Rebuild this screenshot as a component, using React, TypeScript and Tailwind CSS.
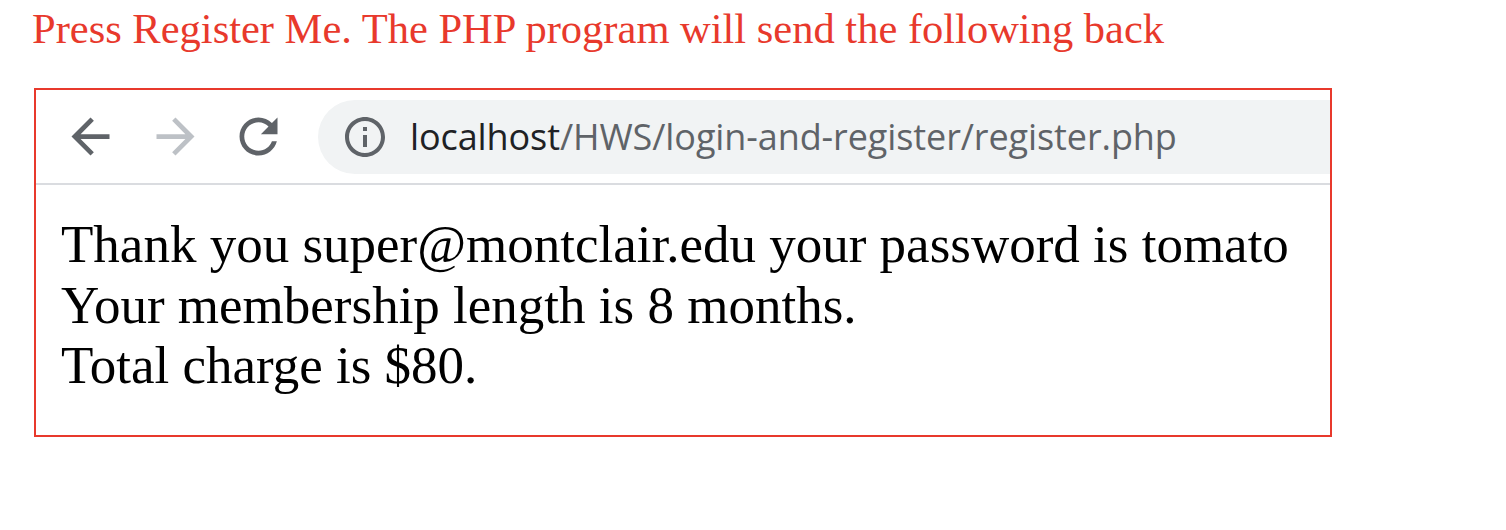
import React from "react";

const Icon = ({ d, className }: { d: string; className: string }) => (
  <svg viewBox="0 0 24 24" className={className} fill="currentColor">
    <path d={d} />
  </svg>
);

export default function App() {
  return (
    <div className="w-[1506px] h-[530px] bg-white pl-[32px] pt-[6px]" style={{ fontFamily: '"Liberation Serif", "Times New Roman", serif' }}>
      <p className="text-[42.5px] leading-[46px] text-[#e8392c]">
        Press Register Me. The PHP program will send the following back
      </p>
      <div className="mt-[36px] ml-[2px] w-[1298px] h-[349px] border-2 border-[#e8392c] overflow-hidden">
        <div className="h-[93px] flex items-center border-b-2 border-[#dadce0] box-content">
          <Icon
            className="w-[57px] h-[57px] ml-[26px] text-[#5f6368]"
            d="M20 11H7.83l5.59-5.59L12 4l-8 8 8 8 1.41-1.41L7.83 13H20v-2z"
          />
          <Icon
            className="w-[57px] h-[57px] ml-[28px] text-[#bdc1c6]"
            d="M12 4l-1.41 1.41L16.17 11H4v2h12.17l-5.58 5.59L12 20l8-8z"
          />
          <Icon
            className="w-[57px] h-[57px] ml-[26px] text-[#5f6368]"
            d="M17.65 6.35C16.2 4.9 14.21 4 12 4c-4.42 0-7.99 3.58-7.99 8s3.57 8 7.99 8c3.73 0 6.84-2.55 7.73-6h-2.08c-.82 2.33-3.04 4-5.65 4-3.31 0-6-2.69-6-6s2.69-6 6-6c1.66 0 3.14.69 4.22 1.78L13 11h7V4l-2.35 2.35z"
          />
          <div className="ml-[31px] flex-1 h-[74px] rounded-l-full bg-[#f1f3f4] flex items-center">
            <Icon
              className="w-[48px] h-[48px] ml-[23px] text-[#5f6368]"
              d="M11 7h2v2h-2zm0 4h2v6h-2zm1-9C6.48 2 2 6.48 2 12s4.48 10 10 10 10-4.48 10-10S17.52 2 12 2zm0 18c-4.41 0-8-3.59-8-8s3.59-8 8-8 8 3.59 8 8-3.59 8-8 8z"
            />
            <span
              className="ml-[21px] text-[36px] leading-none tracking-[-0.1px] text-[#5f6368]"
              style={{ fontFamily: '"Open Sans", "Noto Sans", sans-serif' }}
            >
              <span className="text-[#202124]">localhost</span>/HWS/login-and-register/register.php
            </span>
          </div>
        </div>
        <div className="pl-[25px] pt-[29px] text-[53px] leading-[60.5px] text-black">
          <div>Thank you super@montclair.edu your password is tomato</div>
          <div>Your membership length is 8 months.</div>
          <div>Total charge is $80.</div>
        </div>
      </div>
    </div>
  );
}
